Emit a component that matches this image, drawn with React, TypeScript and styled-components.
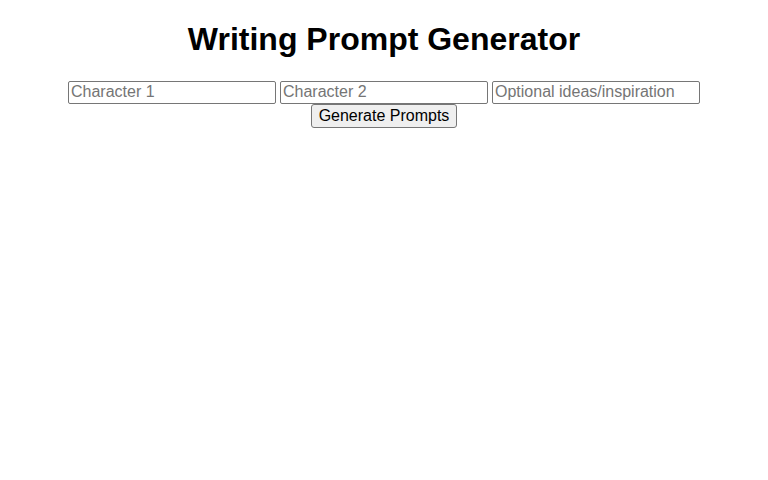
import styled, { createGlobalStyle } from 'styled-components';
import { useState } from 'react';

const GlobalStyle = createGlobalStyle`
  body {
    margin: 8px;
    font-family: 'Liberation Sans', Arial, sans-serif;
    background: #ffffff;
    color: #000000;
  }
`;

const Page = styled.div`
  text-align: center;
`;

const Title = styled.h1`
  font-size: 32px;
  font-weight: bold;
  margin: 13.44px 0 22.44px;
`;

const Form = styled.form`
  display: flex;
  flex-direction: column;
  align-items: center;
  gap: 0;
`;

const InputRow = styled.div`
  display: flex;
  justify-content: center;
  gap: 4px;
`;

const TextInput = styled.input`
  box-sizing: border-box;
  width: 208px;
  height: 23px;
  padding: 1px 2px;
  font-family: 'Liberation Sans', Arial, sans-serif;
  font-size: 16px;
  color: #000;
  border: 1px solid #767676;
  border-radius: 2px;
  background: #fff;
  outline: none;

  &::placeholder {
    color: #757575;
  }
`;

const GenerateButton = styled.button`
  box-sizing: border-box;
  height: 24px;
  padding: 1px 7px;
  font-family: 'Liberation Sans', Arial, sans-serif;
  font-size: 16px;
  color: #000;
  background: #efefef;
  border: 1px solid #767676;
  border-radius: 3px;
  cursor: pointer;
`;

const App = () => {
  const [char1, setChar1] = useState('');
  const [char2, setChar2] = useState('');
  const [ideas, setIdeas] = useState('');

  return (
    <Page>
      <GlobalStyle />
      <Title>Writing Prompt Generator</Title>
      <Form onSubmit={(e) => e.preventDefault()}>
        <InputRow>
          <TextInput
            placeholder="Character 1"
            value={char1}
            onChange={(e) => setChar1(e.target.value)}
          />
          <TextInput
            placeholder="Character 2"
            value={char2}
            onChange={(e) => setChar2(e.target.value)}
          />
          <TextInput
            placeholder="Optional ideas/inspiration"
            value={ideas}
            onChange={(e) => setIdeas(e.target.value)}
          />
        </InputRow>
        <GenerateButton type="submit">Generate Prompts</GenerateButton>
      </Form>
    </Page>
  );
};

export default App;
